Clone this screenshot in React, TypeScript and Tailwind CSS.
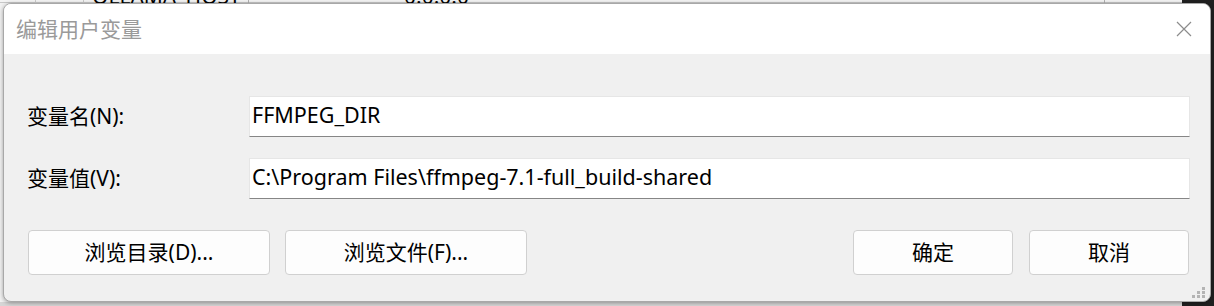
import React from "react";

const font = "font-['Noto_Sans','Noto_Sans_CJK_SC',sans-serif]";

function Btn({ label, w }: { label: string; w: string }) {
  return (
    <button
      className={`${w} h-[45px] shrink-0 rounded-[4px] border border-[#d0d0d0] bg-[#fdfdfd] text-[21px] text-black leading-none flex items-center justify-center ${font}`}
    >
      {label}
    </button>
  );
}

function Field({ label, value, top }: { label: string; value: string; top: string }) {
  return (
    <div className={`flex items-center ${top}`}>
      <div className={`w-[222px] shrink-0 text-[21px] text-black leading-none ${font}`}>{label}</div>
      <div className="flex-1 h-[41px] bg-white border border-[#e6e6e6] border-b-[#868686] flex items-center pl-[2px] pb-[4px]">
        <span className={`text-[21.5px] text-black leading-none ${font}`}>{value}</span>
      </div>
    </div>
  );
}

export default function App() {
  return (
    <div className="relative w-[1214px] h-[306px] overflow-hidden bg-[#f2f2f2]">
      {/* parent window behind the dialog */}
      <div className="absolute left-0 top-0 w-[1214px] h-[306px]">
        <div className="absolute left-0 top-0 w-[1182px] h-[3px] bg-[#f3f3f3] border-b border-[#c8c8c8]" />
        <div className={`absolute left-[92px] top-[-14px] text-[21px] leading-none text-black ${font}`}>OLLAMA_HOST</div>
        <div className={`absolute left-[404px] top-[-14px] text-[21px] leading-none text-black ${font}`}>0.0.0.0</div>
        <div className="absolute left-[35px] top-0 w-px h-[306px] bg-[#c9c9c9]" />
        <div className="absolute left-[83px] top-0 w-px h-[306px] bg-[#c9c9c9]" />
        <div className="absolute left-[248px] top-0 w-px h-[306px] bg-[#b0b0b0]" />
        <div className="absolute left-[1104px] top-0 w-px h-[306px] bg-[#b0b0b0]" />
        <div className="absolute left-[1182px] top-0 w-[32px] h-[306px] bg-[#202020]" />
        <div className="absolute left-0 top-[302px] w-[1182px] h-[4px] bg-[#d6d6d6]" />
      </div>

      <div className="relative pl-[3px] pt-[3px]">
        <div className="w-[1208px] h-[299px] rounded-[8px] border border-[#a8a8a8] bg-[#f0f0f0] overflow-hidden flex flex-col shadow-[0_1px_4px_rgba(0,0,0,0.35)] relative">
          <div className="h-[50px] shrink-0 bg-white flex items-center justify-between pl-[12px] pr-[17px]">
            <span className={`text-[21px] text-[#9a9a9a] leading-none ${font}`}>编辑用户变量</span>
            <svg width="16" height="16" viewBox="0 0 16 16" className="mr-[1px]">
              <path d="M1 1 L15 15 M15 1 L1 15" stroke="#8c8c8c" strokeWidth="1.2" fill="none" />
            </svg>
          </div>
          <div className="flex-1 flex flex-col pl-[23px] pr-[20px]">
            <Field label="变量名(N):" value="FFMPEG_DIR" top="mt-[42px]" />
            <Field label="变量值(V):" value="C:\Program Files\ffmpeg-7.1-full_build-shared" top="mt-[21px]" />
            <div className="flex items-center mt-[31px] pl-[1px]">
              <div className="flex gap-[15px]">
                <Btn label="浏览目录(D)..." w="w-[242px]" />
                <Btn label="浏览文件(F)..." w="w-[242px]" />
              </div>
              <div className="flex-1" />
              <div className="flex gap-[16px] pr-[1px]">
                <Btn label="确定" w="w-[160px]" />
                <Btn label="取消" w="w-[160px]" />
              </div>
            </div>
          </div>
          <svg width="20" height="14" viewBox="0 0 20 14" className="absolute right-[3px] bottom-[1px]">
            <g fill="#b4b4b4">
              <rect x="15" y="1" width="3" height="3" />
              <rect x="10" y="5" width="3" height="3" />
              <rect x="15" y="5" width="3" height="3" />
              <rect x="5" y="9" width="3" height="3" />
              <rect x="10" y="9" width="3" height="3" />
              <rect x="15" y="9" width="3" height="3" />
            </g>
          </svg>
        </div>
      </div>
    </div>
  );
}
